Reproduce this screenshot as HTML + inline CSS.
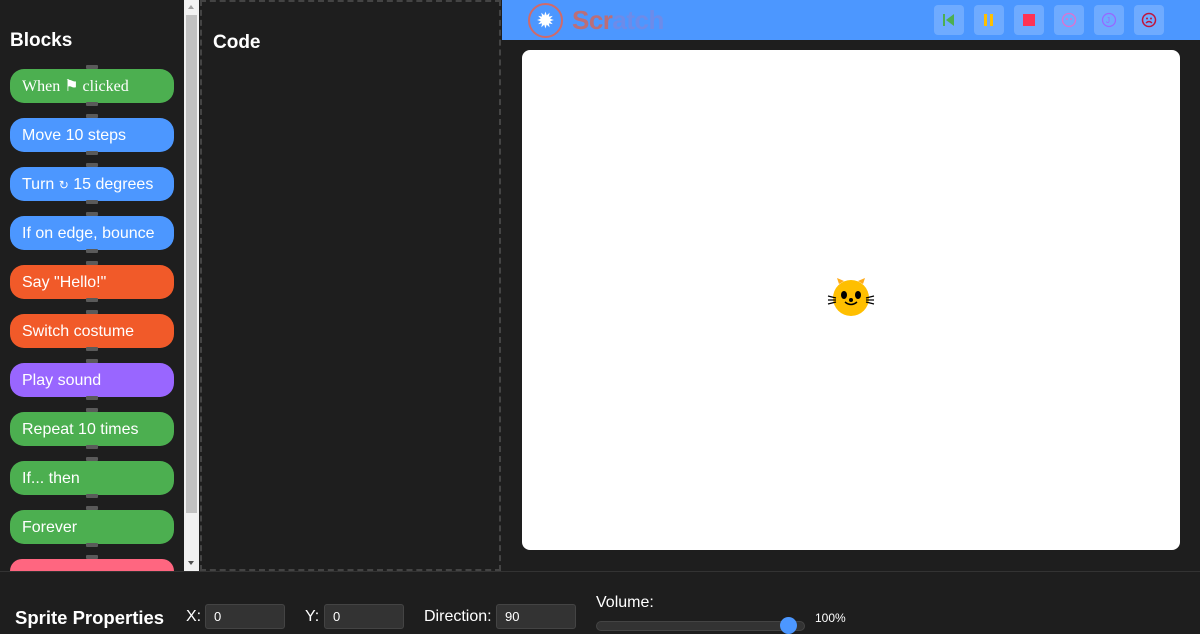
<!DOCTYPE html>
<html><head><style>
*{box-sizing:border-box;margin:0;padding:0}
body{width:1200px;height:630px;overflow:hidden;background:#1e1e1e;font-family:"Liberation Sans",sans-serif;color:#fff;position:relative}
.abs{position:absolute}
.blk{position:absolute;left:10px;width:164px;height:34px;border-radius:14px;font-size:16px;line-height:35px;padding-left:12px}
.tab{position:absolute;left:86px;width:12px;height:4px;background:#5a5a5a;border-radius:1px}
.btn{position:absolute;top:5px;width:30px;height:30px;border-radius:4px;background:rgba(255,255,255,.2);display:flex;align-items:center;justify-content:center}
input{position:absolute;height:25px;background:#333;border:1px solid #444;border-radius:3px;color:#fff;font-size:13px;padding-left:8px;font-family:"Liberation Sans",sans-serif}
.lbl{position:absolute;top:608px;font-size:16px}
</style></head><body>
<div class="abs" style="left:10px;top:30px;font-size:19px;font-weight:bold">Blocks</div>
<div class="blk" style="top:69px;background:#4caf50;font-family:'Liberation Serif',serif;font-size:16px">When ⚑ clicked</div>
<div class="blk" style="top:118px;background:#4c97ff">Move 10 steps</div>
<div class="blk" style="top:167px;background:#4c97ff">Turn <span style="font-size:12px">↻</span> 15 degrees</div>
<div class="blk" style="top:216px;background:#4c97ff">If on edge, bounce</div>
<div class="blk" style="top:265px;background:#f15a29">Say "Hello!"</div>
<div class="blk" style="top:314px;background:#f15a29">Switch costume</div>
<div class="blk" style="top:363px;background:#9966ff">Play sound</div>
<div class="blk" style="top:412px;background:#4caf50">Repeat 10 times</div>
<div class="blk" style="top:461px;background:#4caf50">If... then</div>
<div class="blk" style="top:510px;background:#4caf50">Forever</div>
<div class="blk" style="top:559px;background:#ff6680;height:12px;border-radius:14px 14px 0 0"></div>
<div class="tab" style="top:65px"></div><div class="tab" style="top:102px"></div>
<div class="tab" style="top:114px"></div><div class="tab" style="top:151px"></div>
<div class="tab" style="top:163px"></div><div class="tab" style="top:200px"></div>
<div class="tab" style="top:212px"></div><div class="tab" style="top:249px"></div>
<div class="tab" style="top:261px"></div><div class="tab" style="top:298px"></div>
<div class="tab" style="top:310px"></div><div class="tab" style="top:347px"></div>
<div class="tab" style="top:359px"></div><div class="tab" style="top:396px"></div>
<div class="tab" style="top:408px"></div><div class="tab" style="top:445px"></div>
<div class="tab" style="top:457px"></div><div class="tab" style="top:494px"></div>
<div class="tab" style="top:506px"></div><div class="tab" style="top:543px"></div>
<div class="tab" style="top:555px"></div>
<div class="abs" style="left:184px;top:0;width:15px;height:571px;background:#f1f1f1"></div>
<div class="abs" style="left:186px;top:15px;width:11px;height:498px;background:#c1c1c1"></div>
<div class="abs" style="left:188px;top:5px;width:0;height:0;border:3px solid transparent;border-bottom:4px solid #a0a0a0;border-top:0"></div>
<div class="abs" style="left:188px;top:561px;width:0;height:0;border:3px solid transparent;border-top:4px solid #505050;border-bottom:0"></div>
<div class="abs" style="left:200px;top:0;width:301px;height:571px;border:2px dashed #444"></div>
<div class="abs" style="left:213px;top:32px;font-size:19px;font-weight:bold">Code</div>
<div class="abs" style="left:502px;top:0;width:698px;height:40px;background:#4c97ff"></div>
<div class="abs" style="left:528px;top:3px;width:35px;height:35px;border-radius:50%;border:2px solid #d06a6a;display:flex;align-items:center;justify-content:center;color:#fff;font-size:22px">✹</div>
<div class="abs" style="left:572px;top:5px;font-size:26px;font-weight:bold;color:#c86a6a;opacity:.9;letter-spacing:-0.5px">Scr<span style="color:#8a80d8;opacity:.6">atch</span></div>
<div class="btn" style="left:934px"><svg width="14" height="14"><rect x="1" y="1" width="2" height="12" fill="#4caf50"/><path d="M12 1L4 7L12 13Z" fill="#4caf50"/></svg></div>
<div class="btn" style="left:974px"><svg width="14" height="14"><rect x="2" y="1" width="3" height="12" fill="#ffbf00"/><rect x="8" y="1" width="3" height="12" fill="#ffbf00"/></svg></div>
<div class="btn" style="left:1014px"><svg width="14" height="14"><rect x="1" y="1" width="12" height="12" fill="#ff3355"/></svg></div>
<div class="btn" style="left:1054px"><svg width="16" height="16"><circle cx="8" cy="8" r="6.5" fill="none" stroke="#e070d0" stroke-width="1.3"/><circle cx="6" cy="7" r="1" fill="#e070d0"/><circle cx="10" cy="7" r="1" fill="#e070d0"/></svg></div>
<div class="btn" style="left:1094px"><svg width="16" height="16"><circle cx="8" cy="8" r="6.5" fill="none" stroke="#9966ff" stroke-width="1.2"/><text x="5" y="11" font-size="8" fill="#9966ff">J</text></svg></div>
<div class="btn" style="left:1134px"><svg width="16" height="16"><circle cx="8" cy="8" r="6.5" fill="none" stroke="#c0143c" stroke-width="1.5"/><circle cx="6" cy="6.5" r="1" fill="#c0143c"/><circle cx="10" cy="6.5" r="1" fill="#c0143c"/><path d="M5 11Q8 8 11 11" fill="none" stroke="#c0143c" stroke-width="1.3"/></svg></div>
<div class="abs" style="left:522px;top:50px;width:658px;height:500px;background:#fff;border-radius:8px"></div>
<svg class="abs" style="left:826px;top:276px" width="50" height="42">
<path d="M13 8L11 2L18 5Z M37 8L39 2L32 5Z" fill="#ffab19"/>
<circle cx="25" cy="22" r="18" fill="#ffbf00"/>
<ellipse cx="18" cy="19" rx="3" ry="4" fill="#000"/><ellipse cx="32" cy="19" rx="3" ry="4" fill="#000"/>
<circle cx="25" cy="24" r="2" fill="#000"/>
<path d="M19 26Q25 31 31 26" fill="none" stroke="#000" stroke-width="1.5"/>
<path d="M2 20L10 22M2 24L10 24M2 28L10 26M48 20L40 22M48 24L40 24M48 28L40 26" stroke="#000" stroke-width="1.2"/>
</svg>
<div class="abs" style="left:0;top:571px;width:1200px;height:59px;background:#1e1e1e;border-top:1px solid #333"></div>
<div class="abs" style="left:15px;top:607px;font-size:18.5px;font-weight:bold">Sprite Properties</div>
<div class="lbl" style="left:186px">X:</div><input style="left:205px;top:604px;width:80px" value="0">
<div class="lbl" style="left:305px">Y:</div><input style="left:324px;top:604px;width:80px" value="0">
<div class="lbl" style="left:424px">Direction:</div><input style="left:496px;top:604px;width:80px" value="90">
<div class="abs" style="left:596px;top:594px;font-size:16px">Volume:</div>
<div class="abs" style="left:596px;top:621px;width:209px;height:10px;background:#333;border-radius:5px;border:1px solid #444"></div>
<div class="abs" style="left:780px;top:617px;width:17px;height:17px;border-radius:50%;background:#4c97ff"></div>
<div class="abs" style="left:815px;top:611px;font-size:12px">100%</div>
</body></html>
